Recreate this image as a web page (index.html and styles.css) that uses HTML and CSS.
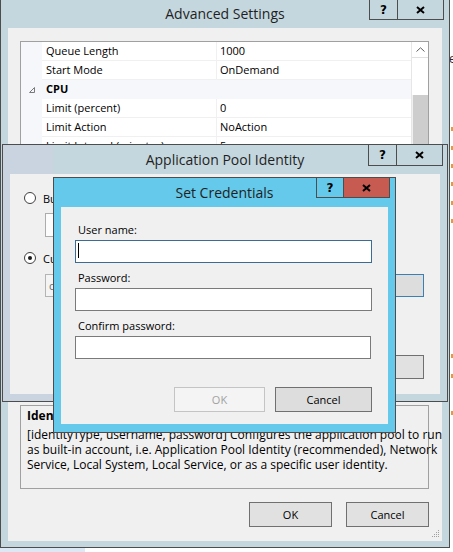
FILE: index.html
```html
<!DOCTYPE html>
<html>
<head>
<meta charset="utf-8">
<title>Set Credentials</title>
<link rel="stylesheet" href="styles.css">
</head>
<body>
<div class="desktop">
  <span class="bg-e">e</span>
  <i class="mark m1"></i><i class="mark m2"></i><i class="mark m3"></i><i class="mark m4"></i>
  <i class="mark m5"></i><i class="mark m6"></i><i class="mark m7"></i><i class="mark m8"></i><i class="mark m9"></i>
  <div class="strip"></div>

  <div class="win win-adv">
    <div class="titlebar">Advanced Settings</div>
    <div class="caps">
      <div class="cap help">?</div>
      <div class="cap close"><svg width="9" height="8" viewBox="0 0 9 8"><path d="M1 1L8 7M8 1L1 7" stroke="#000" stroke-width="2"/></svg></div>
    </div>
    <div class="client adv-client">
      <div class="pgrid">
        <div class="prows">
          <div class="prow"><div class="gut"></div><div class="pname">Queue Length</div><div class="pval">1000</div></div>
          <div class="prow"><div class="gut"></div><div class="pname">Start Mode</div><div class="pval">OnDemand</div></div>
          <div class="prow cat"><div class="gut"><svg width="6" height="6" viewBox="0 0 6 6"><path d="M5.5 0.5V5.5H0.5Z" fill="none" stroke="#7a7a7a" stroke-width="1"/></svg></div><div class="cname">CPU</div></div>
          <div class="prow"><div class="gut"></div><div class="pname">Limit (percent)</div><div class="pval">0</div></div>
          <div class="prow"><div class="gut"></div><div class="pname">Limit Action</div><div class="pval">NoAction</div></div>
          <div class="prow"><div class="gut"></div><div class="pname">Limit Interval (minutes)</div><div class="pval">5</div></div>
          <div class="prow"><div class="gut"></div><div class="pname">Processor Affinity Enabled</div><div class="pval">False</div></div>
          <div class="prow"><div class="gut"></div><div class="pname">Processor Affinity Mask</div><div class="pval">4294967295</div></div>
        </div>
        <div class="vscroll">
          <div class="sb-up"><svg width="9" height="5" viewBox="0 0 9 5"><path d="M0.5 4.5L4.5 0.8L8.5 4.5" fill="none" stroke="#606060" stroke-width="1"/></svg></div>
          <div class="sb-track"></div>
          <div class="sb-thumb"></div>
        </div>
      </div>
      <div class="desc">
        <div class="desc-title">Identity</div>
        <div class="desc-text">[identityType, username, password] Configures the application pool to run<br>as built-in account, i.e. Application Pool Identity (recommended), Network<br>Service, Local System, Local Service, or as a specific user identity.</div>
      </div>
      <div class="btnrow adv-btns">
        <div class="btn w83">OK</div>
        <div class="btn w83">Cancel</div>
      </div>
      <svg class="grip" width="8" height="8" viewBox="0 0 8 8" fill="#a0a0a0"><rect x="6" y="0" width="1" height="1"/><rect x="4" y="2" width="1" height="1"/><rect x="6" y="2" width="1" height="1"/><rect x="2" y="4" width="1" height="1"/><rect x="4" y="4" width="1" height="1"/><rect x="6" y="4" width="1" height="1"/><rect x="0" y="6" width="1" height="1"/><rect x="2" y="6" width="1" height="1"/><rect x="4" y="6" width="1" height="1"/><rect x="6" y="6" width="1" height="1"/></svg>
    </div>
  </div>

  <div class="win win-api">
    <div class="titlebar tb29">Application Pool Identity</div>
    <div class="caps caps-api">
      <div class="cap help">?</div>
      <div class="cap close"><svg width="9" height="8" viewBox="0 0 9 8"><path d="M1 1L8 7M8 1L1 7" stroke="#000" stroke-width="2"/></svg></div>
    </div>
    <div class="client api-client">
      <div class="radio-row"><span class="radio"></span><span>Built-in account:</span></div>
      <div class="combo"></div>
      <div class="radio-row r2"><span class="radio on"><span class="dot"></span></span><span>Custom account:</span></div>
      <div class="acct-row">
        <div class="acct-box">contoso\apppool</div>
        <div class="btn set-btn">Set...</div>
      </div>
      <div class="btnrow api-btns">
        <div class="btn w90">OK</div>
        <div class="btn w90">Cancel</div>
      </div>
    </div>
  </div>

  <div class="win win-cred">
    <div class="titlebar tb29">Set Credentials</div>
    <div class="caps caps-cred">
      <div class="cap help">?</div>
      <div class="cap close red"><svg width="9" height="8" viewBox="0 0 9 8"><path d="M1 1L8 7M8 1L1 7" stroke="#000" stroke-width="2"/></svg></div>
    </div>
    <div class="client cred-client">
      <div class="field">
        <div class="flabel">User name:</div>
        <div class="tbox focus"><span class="caret"></span></div>
      </div>
      <div class="field">
        <div class="flabel">Password:</div>
        <div class="tbox"></div>
      </div>
      <div class="field">
        <div class="flabel">Confirm password:</div>
        <div class="tbox w296"></div>
      </div>
      <div class="btnrow cred-btns">
        <div class="btn disabled w91">OK</div>
        <div class="btn w97">Cancel</div>
      </div>
    </div>
  </div>
</div>
</body>
</html>
```

FILE: styles.css
```css
* { box-sizing: border-box; }
html, body { margin: 0; padding: 0; }
body {
  width: 453px;
  height: 552px;
  overflow: hidden;
  background: #ffffff;
  font-family: "Open Sans", "Noto Sans", sans-serif;
  font-size: 11px;
  color: #000;
}
.desktop { position: relative; width: 453px; height: 552px; overflow: hidden; }

/* background fragments */
.bg-e { position: absolute; left: 449px; top: 52px; width: 4px; overflow: hidden; font-size: 12px; color: #3a2626; line-height: 14px; }
.mark { position: absolute; left: 451px; width: 2px; height: 4px; background: #e39a3c; }
.m1 { top: 127px; } .m2 { top: 146px; } .m3 { top: 164px; } .m4 { top: 182px; }
.m5 { top: 201px; } .m6 { top: 219px; } .m7 { top: 354px; } .m8 { top: 374px; } .m9 { top: 411px; }
.strip { position: absolute; left: 0; top: 548px; width: 85px; height: 4px; background: #dce9f5; }

/* windows */
.win {
  position: absolute;
  display: flex;
  flex-direction: column;
  border: 1px solid #4d4d4d;
  padding: 0 7px 6px;
}
.win-adv { left: 0; top: -1px; width: 450px; height: 549px; background: #c5d7de; }
.win-api {
  left: 2px; top: 144px; width: 446px; height: 258px; padding-bottom: 7px;
  background: linear-gradient(90deg, #c9d4e0 0, #c9d4e0 50px, #c5d7de 50px);
}
.win-cred { left: 53px; top: 177px; width: 343px; height: 256px; padding-bottom: 8px; background: #64c9ea; }

.titlebar {
  flex: none;
  height: 28px;
  display: flex;
  align-items: center;
  justify-content: center;
  font-size: 14px;
  color: #1f1f1f;
  padding-bottom: 1px;
}
.tb29 { height: 29px; }

.caps {
  position: absolute;
  top: -1px;
  right: 5px;
  display: flex;
  height: 21px;
  border: 1px solid #4d4d4d;
}
.caps-api { right: 4px; height: 22px; }
.cap { display: flex; align-items: center; justify-content: center; }
.help { width: 28px; border-right: 1px solid #4d4d4d; font: bold 12px "DejaVu Sans", sans-serif; }
.close { width: 45px; }
.caps-cred .help { width: 27px; }
.red { background: #c75a51; }

.client { flex: 1; background: #f0f0f0; display: flex; flex-direction: column; position: relative; }

/* Advanced Settings client */
.adv-client { padding: 13px 13px 14px 12px; }
.pgrid { height: 354px; border: 1px solid #a0a0a0; display: flex; background: #fff; }
.prows { flex: 1; display: flex; flex-direction: column; }
.prow { display: flex; height: 19px; line-height: 18px; }
.gut { width: 21px; background: #f5f7fb; display: flex; align-items: center; justify-content: center; }
.pname { width: 175px; padding-left: 4px; border-right: 1px solid #f0f0f0; border-bottom: 1px solid #f0f0f0; white-space: nowrap; overflow: hidden; }
.pval { flex: 1; padding-left: 3px; border-bottom: 1px solid #f0f0f0; }
.cat { background: #f5f7fb; }
.cname { padding-left: 4px; font-weight: bold; }
.vscroll { width: 17px; border-left: 1px solid #e6e6e6; display: flex; flex-direction: column; background: #fff; }
.sb-up { height: 16px; border-bottom: 1px solid #e0e0e0; display: flex; align-items: center; justify-content: center; }
.sb-track { height: 37px; }
.sb-thumb { flex: 1; background: #cdcdcd; border-left: 1px solid #f0f0f0; }

.desc { height: 84px; margin-top: 10px; border: 1px solid #a0a0a0; padding: 2px 6px; }
.desc-title { font-weight: bold; font-size: 12px; line-height: 15px; margin-bottom: 4px; }
.desc-text { font-size: 12px; line-height: 15px; white-space: nowrap; }

.btnrow { display: flex; justify-content: flex-end; gap: 14px; }
.adv-btns { margin-top: 13px; height: 25px; }
.btn {
  height: 25px;
  display: flex;
  align-items: center;
  justify-content: center;
  background: #e1e1e1;
  border: 1px solid #707070;
}
.w83 { width: 83px; }
.w90 { width: 90px; height: 24px; }
.w91 { width: 91px; }
.w97 { width: 97px; }
.disabled { background: #f4f4f4; border-color: #c4c4c4; color: #a2a2a2; }
.grip { position: absolute; right: 2px; bottom: 3px; }

/* Application Pool Identity client */
.api-client { padding: 18px 16px 0 14px; }
.radio-row { display: flex; align-items: center; gap: 7px; height: 12px; white-space: nowrap; }
.r2 { margin-top: 15px; }
.radio {
  width: 12px; height: 12px; border-radius: 50%;
  border: 1px solid #3f3f3f; background: #fff;
  display: flex; align-items: center; justify-content: center; flex: none;
}
.dot { width: 4px; height: 4px; border-radius: 50%; background: #1a1a1a; }
.combo { margin: 9px 0 0 21px; width: 280px; height: 24px; border: 1px solid #acacac; background: #fcfcfc; }
.acct-row { margin: 10px 0 0 21px; display: flex; gap: 9px; height: 23px; }
.acct-box { flex: 1; border: 1px solid #b4b4b4; background: #f4f4f4; color: #6d6d6d; padding-left: 3px; line-height: 21px; }
.set-btn { width: 90px; height: 23px; background: #dddddd; border-color: #3c7fb1; }
.api-btns { margin-top: 58px; gap: 10px; }

/* Set Credentials client */
.cred-client { padding: 15px 16px 0 14px; }
.field + .field { margin-top: 7px; }
.flabel { padding-left: 3px; line-height: 16px; margin-bottom: 2px; }
.tbox { width: 297px; height: 23px; border: 1px solid #7a7a7a; background: #fff; }
.tbox.focus { border-color: #3a6c94; }
.w296 { width: 296px; }
.caret { display: block; width: 1px; height: 15px; background: #000; margin: 2px 0 0 2px; }
.cred-btns { margin-top: 28px; gap: 10px; }
.cred-btns .btn { height: 25px; background: #dddddd; }
.cred-btns .disabled { background: #f4f4f4; }
```
